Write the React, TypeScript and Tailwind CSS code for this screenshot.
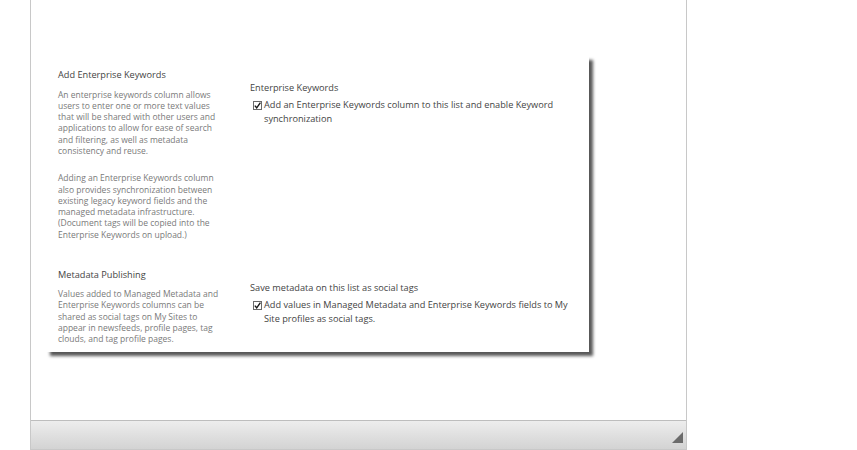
function Check() {
  return (
    <svg width="9" height="9" viewBox="0 0 9 9" className="mt-[3px] shrink-0">
      <rect x="0.5" y="0.5" width="8" height="8" fill="#fff" stroke="#6a6a6a" />
      <path d="M1.8 4.6 L3.7 6.8 L7.4 1.6" fill="none" stroke="#1a1a1a" strokeWidth="1.4" />
    </svg>
  );
}

export default function App() {
  return (
    <div className="h-[450px] w-[857px] bg-white font-['Open_Sans',sans-serif]">
      {/* dialog frame */}
      <div className="ml-[30px] flex h-full w-[657px] flex-col border-x border-b border-[#c8c8c8]">
        <div className="flex-1 pl-[15px] pt-[56px]">
          {/* settings card */}
          <div className="h-[296px] w-[543px] bg-white pl-[12px] pt-[12px] shadow-[4px_4px_3px_#585858]">
            {/* Enterprise keywords row */}
            <div className="grid grid-cols-[192px_1fr] pb-[28px]">
              <div>
                <div className="text-[9.2px] leading-[14px] text-[#444]">Add Enterprise Keywords</div>
                <div className="mt-[6.5px] text-[8.5px] leading-[11.3px] text-[#7a7a7a]">
                  <p>
                    An enterprise keywords column allows
                    <br />
                    users to enter one or more text values
                    <br />
                    that will be shared with other users and
                    <br />
                    applications to allow for ease of search
                    <br />
                    and filtering, as well as metadata
                    <br />
                    consistency and reuse.
                  </p>
                  <p className="mt-[16px]">
                    Adding an Enterprise Keywords column
                    <br />
                    also provides synchronization between
                    <br />
                    existing legacy keyword fields and the
                    <br />
                    managed metadata infrastructure.
                    <br />
                    (Document tags will be copied into the
                    <br />
                    Enterprise Keywords on upload.)
                  </p>
                </div>
              </div>
              <div className="pt-[12.5px] text-[9.2px] leading-[14.5px] text-[#444]">
                <div>Enterprise Keywords</div>
                <div className="mt-[2.8px] flex gap-[2px] pl-[3px]">
                  <Check />
                  <div>
                    Add an Enterprise Keywords column to this list and enable Keyword
                    <br />
                    synchronization
                  </div>
                </div>
              </div>
            </div>

            {/* Metadata publishing row */}
            <div className="grid grid-cols-[192px_1fr]">
              <div>
                <div className="text-[9.2px] leading-[14px] text-[#444]">Metadata Publishing</div>
                <div className="mt-[6px] text-[8.5px] leading-[11.3px] text-[#7a7a7a]">
                  Values added to Managed Metadata and
                  <br />
                  Enterprise Keywords columns can be
                  <br />
                  shared as social tags on My Sites to
                  <br />
                  appear in newsfeeds, profile pages, tag
                  <br />
                  clouds, and tag profile pages.
                </div>
              </div>
              <div className="pt-[12.5px] text-[9.2px] leading-[14.5px] text-[#444]">
                <div>Save metadata on this list as social tags</div>
                <div className="mt-[2.8px] flex gap-[2px] pl-[3px]">
                  <Check />
                  <div>
                    Add values in Managed Metadata and Enterprise Keywords fields to My
                    <br />
                    Site profiles as social tags.
                  </div>
                </div>
              </div>
            </div>
          </div>
        </div>

        {/* bottom bar with resize grip */}
        <div className="flex h-[29px] items-end justify-end border-t border-[#bdbdbd] bg-gradient-to-b from-[#ededed] to-[#d3d3d3] pb-[6px] pr-[3px]">
          <svg width="11" height="11" viewBox="0 0 11 11">
            <polygon points="11,0 11,11 0,11" fill="#6b6b6b" />
          </svg>
        </div>
      </div>
    </div>
  );
}
